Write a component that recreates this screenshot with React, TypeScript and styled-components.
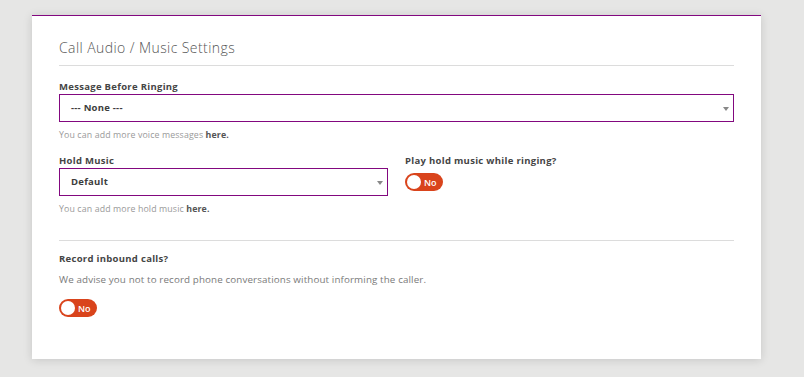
import React from "react";
import styled, { createGlobalStyle } from "styled-components";

const Global = createGlobalStyle`
  html, body { margin: 0; padding: 0; background: #e6e6e5; }
  body { font-family: "Open Sans", "Liberation Sans", sans-serif; color: #444; }
  * { box-sizing: border-box; }
`;

const Page = styled.div`
  display: flex;
  flex-direction: column;
  gap: 15px;
  padding: 0 0 18px 32px;
  width: 804px;
  height: 377px;
  overflow: hidden;
`;

const PrevCard = styled.div`
  width: 729px;
  height: 0;
  box-shadow: 0 2px 9px rgba(0, 0, 0, 0.13);
`;

const Card = styled.section`
  position: relative;
  width: 729px;
  background: #fff;
  box-shadow: 0 1px 9px rgba(0, 0, 0, 0.14);
  padding: 23px 27px 42px 27px;

  &::before {
    content: "";
    position: absolute;
    left: 0;
    right: 0;
    top: 0;
    height: 1px;
    background: #82087f;
  }
`;

const Heading = styled.h2`
  margin: 0 0 7px;
  font-size: 14px;
  font-weight: 300;
  line-height: 20px;
  letter-spacing: 0.42px;
  color: #555;
`;

const Divider = styled.hr<{ $top?: number }>`
  border: 0;
  border-top: 1px solid #dcdcdc;
  margin: ${(p) => p.$top ?? 0}px 0 0;
`;

const Field = styled.div<{ $top?: number }>`
  display: flex;
  flex-direction: column;
  margin-top: ${(p) => p.$top ?? 0}px;
`;

const Row = styled.div`
  display: grid;
  grid-template-columns: 329px 329px;
  column-gap: 17px;
  margin-top: 14px;
`;

const Label = styled.label`
  font-size: 9.5px;
  font-weight: 700;
  line-height: 12px;
  letter-spacing: 0.3px;
  color: #454545;
  margin-bottom: 1px;
`;

const SelectBox = styled.div`
  position: relative;
  height: 28px;
  border: 1px solid #82087f;
  display: flex;
  align-items: center;
  padding: 0 11px 1px;
  font-size: 9.5px;
  font-weight: 700;
  letter-spacing: 0.25px;
  color: #3d3d3d;
`;

const Caret = styled.span`
  position: absolute;
  right: 4px;
  top: 50%;
  margin-top: -1px;
  width: 0;
  height: 0;
  border-left: 3.5px solid transparent;
  border-right: 3.5px solid transparent;
  border-top: 4px solid #888;
`;

const Help = styled.p`
  margin: 7px 0 0;
  font-size: 8.8px;
  line-height: 12px;
  letter-spacing: 0.12px;
  color: #9a9a9a;
  b { color: #555; font-weight: 700; }
`;

const Note = styled.p`
  margin: 7px 0 0;
  font-size: 9.8px;
  line-height: 14px;
  letter-spacing: 0.12px;
  color: #7a7a7a;
`;

const Toggle = styled.div<{ $top?: number }>`
  margin-top: ${(p) => p.$top ?? 0}px;
  width: 38px;
  height: 18px;
  border-radius: 9px;
  background: #d9441c;
  display: flex;
  align-items: center;
  padding: 0 2px;
  gap: 3px;
  color: #fff;
  font-size: 9px;
  font-weight: 600;
`;

const Knob = styled.span`
  width: 14px;
  height: 14px;
  border-radius: 50%;
  background: #fff;
`;

export default function App() {
  return (
    <>
      <Global />
      <Page>
        <PrevCard />
        <Card>
          <Heading>Call Audio / Music Settings</Heading>
          <Divider />
          <Field $top={15}>
            <Label>Message Before Ringing</Label>
            <SelectBox>
              --- None ---
              <Caret />
            </SelectBox>
            <Help>
              You can add more voice messages <b>here.</b>
            </Help>
          </Field>
          <Row>
            <Field>
              <Label>Hold Music</Label>
              <SelectBox>
                Default
                <Caret />
              </SelectBox>
              <Help>
                You can add more hold music <b>here.</b>
              </Help>
            </Field>
            <Field>
              <Label>Play hold music while ringing?</Label>
              <Toggle $top={5}>
                <Knob />
                No
              </Toggle>
            </Field>
          </Row>
          <Divider $top={25} />
          <Field $top={12}>
            <Label>Record inbound calls?</Label>
            <Note>We advise you not to record phone conversations without informing the caller.</Note>
            <Toggle $top={12}>
              <Knob />
              No
            </Toggle>
          </Field>
        </Card>
      </Page>
    </>
  );
}
